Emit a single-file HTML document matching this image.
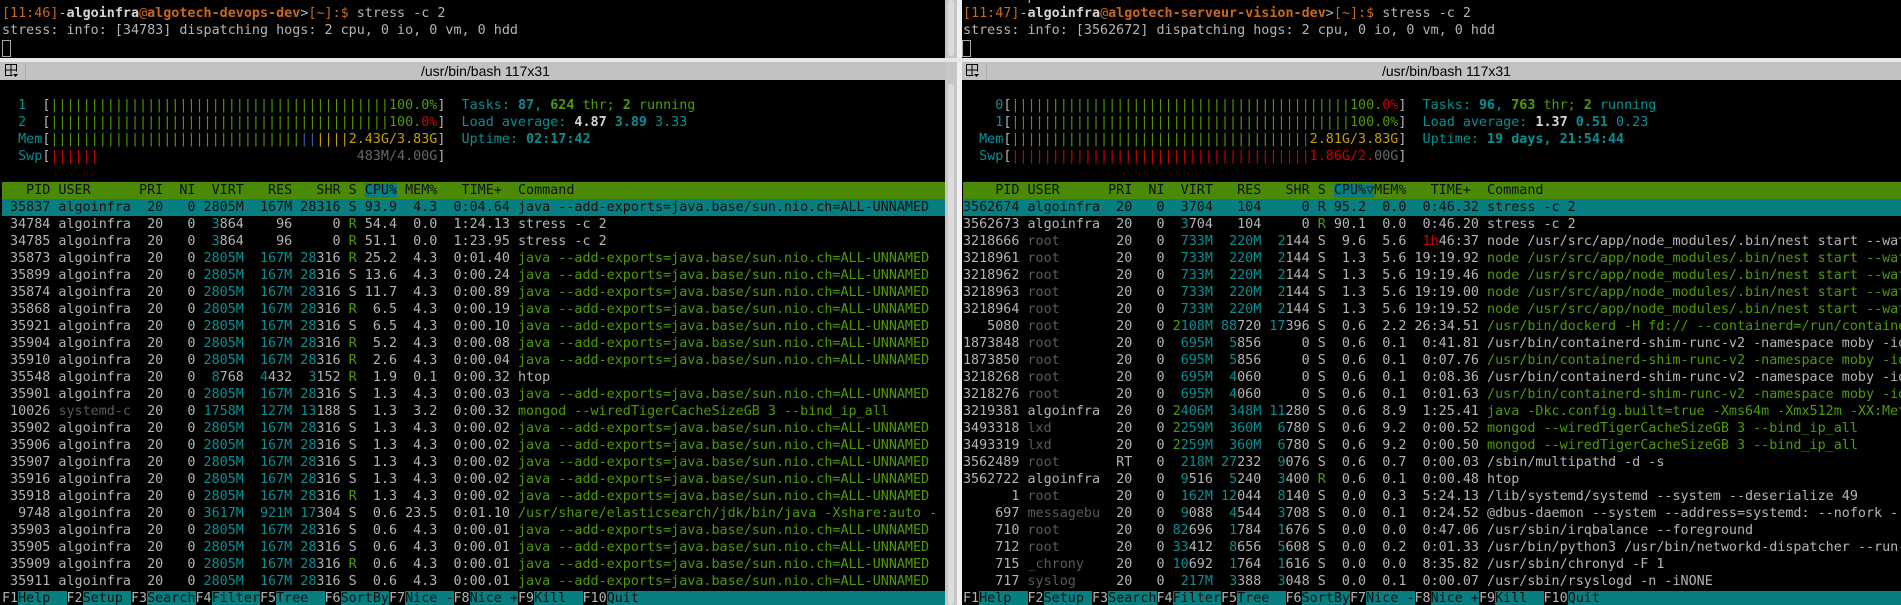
<!DOCTYPE html>
<html><head><meta charset="utf-8"><style>
*{margin:0;padding:0;box-sizing:border-box}
html,body{width:1901px;height:605px;background:#000;overflow:hidden}
.p{position:absolute;font-family:"DejaVu Sans Mono","Liberation Mono",monospace;font-size:13.4px;line-height:17px;color:#b4b4b4;white-space:normal;overflow:hidden}
.r{height:17px;white-space:pre;overflow:hidden}
.c{color:#079092}.g{color:#4e9a06}.d{color:#5a5a5a}.x{color:#cc0000}.w{color:#d4d4d4;font-weight:bold}
.cb{color:#079092;font-weight:bold}.gb{color:#4e9a06;font-weight:bold}
.bl{color:#3465a4}.o{color:#c4a000}.gr{color:#666}
.o1{color:#c8681e}.o2{color:#c8681e;font-weight:bold}
.sel{background:#077f80;color:#111}
.hd{background:#4a8a06;color:#111}
.hc{background:#077f80}
.fk{color:#b4b4b4}.fl{background:#077f80;color:#111}
.bar{position:absolute;top:62px;height:18px;background:#c2c2c2}
.ttl{position:absolute;top:62px;height:18px;line-height:18px;font-family:"Liberation Sans",sans-serif;font-size:14px;color:#000}
</style></head><body>
<div class="p" style="left:2px;top:-12px;width:944px;height:70px"><div class="r"> </div><div class="r"><span class="o1">[11:46]</span>-<span class="w">algoinfra</span><span class="o1">@</span><span class="o2">algotech-devops-dev</span>&gt;<span class="o1">[~]:$</span> stress -c 2</div><div class="r">stress: info: [34783] dispatching hogs: 2 cpu, 0 io, 0 vm, 0 hdd</div></div>
<div style="position:absolute;left:2px;top:40px;width:9px;height:17px;border:1px solid #aaa"></div>
<div class="p" style="left:963px;top:-12px;width:938px;height:70px"><div class="r">streamzip  stress</div><div class="r"><span class="o1">[11:47]</span>-<span class="w">algoinfra</span><span class="o1">@</span><span class="o2">algotech-serveur-vision-dev</span>&gt;<span class="o1">[~]:$</span> stress -c 2</div><div class="r">stress: info: [3562672] dispatching hogs: 2 cpu, 0 io, 0 vm, 0 hdd</div></div>
<div style="position:absolute;left:962px;top:40px;width:9px;height:17px;border:1px solid #aaa"></div>
<div class="bar" style="left:0;width:1901px"></div>
<div style="position:absolute;left:945px;top:0;width:12px;height:605px;background:#c6c6c6"></div>
<div style="position:absolute;left:948px;top:0;width:6px;height:56px;background:#dcdcdc;border-radius:3px"></div>
<div style="position:absolute;left:948px;top:84px;width:6px;height:521px;background:#dcdcdc;border-radius:3px"></div>
<div style="position:absolute;left:957px;top:0;width:5px;height:605px;background:#f0f0f0"></div>
<div style="position:absolute;left:0;top:58px;width:1901px;height:4px;background:#e8e8e8"></div>
<svg style="position:absolute;left:5px;top:64px" width="14" height="14" viewBox="0 0 14 14"><path d="M0.5 0.5H11.5V7.5M0.5 0.5V11.5H7.5M6 0.5V11.5M0.5 6H11.5" fill="none" stroke="#000"/><path d="M8 10H13L10.5 13Z" fill="#000"/></svg>
<div style="position:absolute;left:25px;top:63px;width:1px;height:16px;background:#aaa"></div>
<svg style="position:absolute;left:966px;top:64px" width="14" height="14" viewBox="0 0 14 14"><path d="M0.5 0.5H11.5V7.5M0.5 0.5V11.5H7.5M6 0.5V11.5M0.5 6H11.5" fill="none" stroke="#000"/><path d="M8 10H13L10.5 13Z" fill="#000"/></svg>
<div style="position:absolute;left:986px;top:63px;width:1px;height:16px;background:#aaa"></div>
<div class="ttl" style="left:421px">/usr/bin/bash 117x31</div>
<div class="ttl" style="left:1382px">/usr/bin/bash 117x31</div>

<div class="p" style="left:2px;top:80px;width:943px;height:525px">
<div class="r"> </div>
<div class="r"><span class="c">  1  </span>[<span class="g">||||||||||||||||||||||||||||||||||||||||||100.0%</span>]  <span class="c">Tasks: </span><span class="cb">87</span><span class="c">, </span><span class="gb">624</span><span class="g"> thr; </span><span class="gb">2</span><span class="g"> running</span></div>
<div class="r"><span class="c">  2  </span>[<span class="g">||||||||||||||||||||||||||||||||||||||||||100.</span><span class="x">0%</span>]  <span class="c">Load average: </span><span class="w">4.87 </span><span class="cb">3.89 </span><span class="c">3.33</span></div>
<div class="r"><span class="c">  Mem</span>[<span class="g">|||||||||||||||||||||||||||||||</span><span class="bl">||</span><span class="o">||||2.43G/3.83G</span>]  <span class="c">Uptime: </span><span class="cb">02:17:42</span></div>
<div class="r"><span class="c">  Swp</span>[<span class="x">||||||</span>                                <span class="gr">483M/4.00G</span>]</div>
<div class="r"> </div>
<div class="r hd">   PID USER      PRI  NI  VIRT   RES   SHR S <span class="hc">CPU%</span> MEM%   TIME+  Command                                                                  </div>
<div class="r sel"> 35837 algoinfra  20   0 2805M  167M 28316 S 93.9  4.3  0:04.64 java --add-exports=java.base/sun.nio.ch=ALL-UNNAMED                    </div>
<div class="r"> 34784 algoinfra  20   0  <span class="c">3</span>864    96     0 <span class="g">R</span> 54.4  0.0  1:24.13 stress -c 2</div>
<div class="r"> 34785 algoinfra  20   0  <span class="c">3</span>864    96     0 <span class="g">R</span> 51.1  0.0  1:23.95 stress -c 2</div>
<div class="r"> 35873 algoinfra  20   0 <span class="c">2805M</span>  <span class="c">167M</span> <span class="c">28</span>316 <span class="g">R</span> 25.2  4.3  0:01.40 <span class="g">java --add-exports=java.base/sun.nio.ch=ALL-UNNAMED</span></div>
<div class="r"> 35899 algoinfra  20   0 <span class="c">2805M</span>  <span class="c">167M</span> <span class="c">28</span>316 S 13.6  4.3  0:00.24 <span class="g">java --add-exports=java.base/sun.nio.ch=ALL-UNNAMED</span></div>
<div class="r"> 35874 algoinfra  20   0 <span class="c">2805M</span>  <span class="c">167M</span> <span class="c">28</span>316 S 11.7  4.3  0:00.89 <span class="g">java --add-exports=java.base/sun.nio.ch=ALL-UNNAMED</span></div>
<div class="r"> 35868 algoinfra  20   0 <span class="c">2805M</span>  <span class="c">167M</span> <span class="c">28</span>316 <span class="g">R</span>  6.5  4.3  0:00.19 <span class="g">java --add-exports=java.base/sun.nio.ch=ALL-UNNAMED</span></div>
<div class="r"> 35921 algoinfra  20   0 <span class="c">2805M</span>  <span class="c">167M</span> <span class="c">28</span>316 S  6.5  4.3  0:00.10 <span class="g">java --add-exports=java.base/sun.nio.ch=ALL-UNNAMED</span></div>
<div class="r"> 35904 algoinfra  20   0 <span class="c">2805M</span>  <span class="c">167M</span> <span class="c">28</span>316 <span class="g">R</span>  5.2  4.3  0:00.08 <span class="g">java --add-exports=java.base/sun.nio.ch=ALL-UNNAMED</span></div>
<div class="r"> 35910 algoinfra  20   0 <span class="c">2805M</span>  <span class="c">167M</span> <span class="c">28</span>316 <span class="g">R</span>  2.6  4.3  0:00.04 <span class="g">java --add-exports=java.base/sun.nio.ch=ALL-UNNAMED</span></div>
<div class="r"> 35548 algoinfra  20   0  <span class="c">8</span>768  <span class="c">4</span>432  <span class="c">3</span>152 <span class="g">R</span>  1.9  0.1  0:00.32 htop</div>
<div class="r"> 35901 algoinfra  20   0 <span class="c">2805M</span>  <span class="c">167M</span> <span class="c">28</span>316 S  1.3  4.3  0:00.03 <span class="g">java --add-exports=java.base/sun.nio.ch=ALL-UNNAMED</span></div>
<div class="r"> 10026 <span class="d">systemd-c</span>  20   0 <span class="c">1758M</span>  <span class="c">127M</span> <span class="c">13</span>188 S  1.3  3.2  0:00.32 <span class="g">mongod --wiredTigerCacheSizeGB 3 --bind_ip_all</span></div>
<div class="r"> 35902 algoinfra  20   0 <span class="c">2805M</span>  <span class="c">167M</span> <span class="c">28</span>316 S  1.3  4.3  0:00.02 <span class="g">java --add-exports=java.base/sun.nio.ch=ALL-UNNAMED</span></div>
<div class="r"> 35906 algoinfra  20   0 <span class="c">2805M</span>  <span class="c">167M</span> <span class="c">28</span>316 S  1.3  4.3  0:00.02 <span class="g">java --add-exports=java.base/sun.nio.ch=ALL-UNNAMED</span></div>
<div class="r"> 35907 algoinfra  20   0 <span class="c">2805M</span>  <span class="c">167M</span> <span class="c">28</span>316 S  1.3  4.3  0:00.02 <span class="g">java --add-exports=java.base/sun.nio.ch=ALL-UNNAMED</span></div>
<div class="r"> 35916 algoinfra  20   0 <span class="c">2805M</span>  <span class="c">167M</span> <span class="c">28</span>316 S  1.3  4.3  0:00.02 <span class="g">java --add-exports=java.base/sun.nio.ch=ALL-UNNAMED</span></div>
<div class="r"> 35918 algoinfra  20   0 <span class="c">2805M</span>  <span class="c">167M</span> <span class="c">28</span>316 <span class="g">R</span>  1.3  4.3  0:00.02 <span class="g">java --add-exports=java.base/sun.nio.ch=ALL-UNNAMED</span></div>
<div class="r">  9748 algoinfra  20   0 <span class="c">3617M</span>  <span class="c">921M</span> <span class="c">17</span>304 S  0.6 23.5  0:01.10 <span class="g">/usr/share/elasticsearch/jdk/bin/java -Xshare:auto -</span></div>
<div class="r"> 35903 algoinfra  20   0 <span class="c">2805M</span>  <span class="c">167M</span> <span class="c">28</span>316 S  0.6  4.3  0:00.01 <span class="g">java --add-exports=java.base/sun.nio.ch=ALL-UNNAMED</span></div>
<div class="r"> 35905 algoinfra  20   0 <span class="c">2805M</span>  <span class="c">167M</span> <span class="c">28</span>316 S  0.6  4.3  0:00.01 <span class="g">java --add-exports=java.base/sun.nio.ch=ALL-UNNAMED</span></div>
<div class="r"> 35909 algoinfra  20   0 <span class="c">2805M</span>  <span class="c">167M</span> <span class="c">28</span>316 <span class="g">R</span>  0.6  4.3  0:00.01 <span class="g">java --add-exports=java.base/sun.nio.ch=ALL-UNNAMED</span></div>
<div class="r"> 35911 algoinfra  20   0 <span class="c">2805M</span>  <span class="c">167M</span> <span class="c">28</span>316 S  0.6  4.3  0:00.01 <span class="g">java --add-exports=java.base/sun.nio.ch=ALL-UNNAMED</span></div>
<div class="r"><span class="fk">F1</span><span class="fl">Help  </span><span class="fk">F2</span><span class="fl">Setup </span><span class="fk">F3</span><span class="fl">Search</span><span class="fk">F4</span><span class="fl">Filter</span><span class="fk">F5</span><span class="fl">Tree  </span><span class="fk">F6</span><span class="fl">SortBy</span><span class="fk">F7</span><span class="fl">Nice -</span><span class="fk">F8</span><span class="fl">Nice +</span><span class="fk">F9</span><span class="fl">Kill  </span><span class="fk">F10</span><span class="fl">Quit                                      </span></div>
</div>

<div class="p" style="left:963px;top:80px;width:938px;height:525px">
<div class="r"> </div>
<div class="r"><span class="c">    0</span>[<span class="g">||||||||||||||||||||||||||||||||||||||||||100.</span><span class="x">0%</span>]  <span class="c">Tasks: </span><span class="cb">96</span><span class="c">, </span><span class="gb">763</span><span class="g"> thr; </span><span class="gb">2</span><span class="c"> running</span></div>
<div class="r"><span class="c">    1</span>[<span class="g">||||||||||||||||||||||||||||||||||||||||||100.0%</span>]  <span class="c">Load average: </span><span class="w">1.37 </span><span class="cb">0.51 </span><span class="c">0.23</span></div>
<div class="r"><span class="c">  Mem</span>[<span class="g">||||||||||||||||||||||||||||||||||||</span><span class="bl">|</span><span class="o">2.81G/3.83G</span>]  <span class="c">Uptime: </span><span class="cb">19 days, 21:54:44</span></div>
<div class="r"><span class="c">  Swp</span>[<span class="x">|||||||||||||||||||||||||||||||||||||1.86G/2.</span><span class="gr">00G</span>]</div>
<div class="r"> </div>
<div class="r hd">    PID USER      PRI  NI  VIRT   RES   SHR S <span class="hc">CPU%▽</span>MEM%   TIME+  Command                                                                 </div>
<div class="r sel">3562674 algoinfra  20   0  3704   104     0 R 95.2  0.0  0:46.32 stress -c 2                                                            </div>
<div class="r">3562673 algoinfra  20   0  <span class="c">3</span>704   104     0 <span class="g">R</span> 90.1  0.0  0:46.20 stress -c 2</div>
<div class="r">3218666 <span class="d">root</span>       20   0  <span class="c">733M</span>  <span class="c">220M</span>  <span class="c">2</span>144 S  9.6  5.6  <span class="x">1h</span>46:37 node /usr/src/app/node_modules/.bin/nest start --wat</div>
<div class="r">3218961 <span class="d">root</span>       20   0  <span class="c">733M</span>  <span class="c">220M</span>  <span class="c">2</span>144 S  1.3  5.6 19:19.92 <span class="g">node /usr/src/app/node_modules/.bin/nest start --wat</span></div>
<div class="r">3218962 <span class="d">root</span>       20   0  <span class="c">733M</span>  <span class="c">220M</span>  <span class="c">2</span>144 S  1.3  5.6 19:19.46 <span class="g">node /usr/src/app/node_modules/.bin/nest start --wat</span></div>
<div class="r">3218963 <span class="d">root</span>       20   0  <span class="c">733M</span>  <span class="c">220M</span>  <span class="c">2</span>144 S  1.3  5.6 19:19.00 <span class="g">node /usr/src/app/node_modules/.bin/nest start --wat</span></div>
<div class="r">3218964 <span class="d">root</span>       20   0  <span class="c">733M</span>  <span class="c">220M</span>  <span class="c">2</span>144 S  1.3  5.6 19:19.52 <span class="g">node /usr/src/app/node_modules/.bin/nest start --wat</span></div>
<div class="r">   5080 <span class="d">root</span>       20   0 <span class="g">2</span><span class="c">108M</span> <span class="c">88</span>720 <span class="c">17</span>396 S  0.6  2.2 26:34.51 <span class="g">/usr/bin/dockerd -H fd:// --containerd=/run/containe</span></div>
<div class="r">1873848 <span class="d">root</span>       20   0  <span class="c">695M</span>  <span class="c">5</span>856     0 S  0.6  0.1  0:41.81 /usr/bin/containerd-shim-runc-v2 -namespace moby -id</div>
<div class="r">1873850 <span class="d">root</span>       20   0  <span class="c">695M</span>  <span class="c">5</span>856     0 S  0.6  0.1  0:07.76 <span class="g">/usr/bin/containerd-shim-runc-v2 -namespace moby -id</span></div>
<div class="r">3218268 <span class="d">root</span>       20   0  <span class="c">695M</span>  <span class="c">4</span>060     0 S  0.6  0.1  0:08.36 /usr/bin/containerd-shim-runc-v2 -namespace moby -id</div>
<div class="r">3218276 <span class="d">root</span>       20   0  <span class="c">695M</span>  <span class="c">4</span>060     0 S  0.6  0.1  0:01.63 <span class="g">/usr/bin/containerd-shim-runc-v2 -namespace moby -id</span></div>
<div class="r">3219381 algoinfra  20   0 <span class="g">2</span><span class="c">406M</span>  <span class="c">348M</span> <span class="c">11</span>280 S  0.6  8.9  1:25.41 <span class="g">java -Dkc.config.built=true -Xms64m -Xmx512m -XX:Met</span></div>
<div class="r">3493318 <span class="d">lxd</span>        20   0 <span class="g">2</span><span class="c">259M</span>  <span class="c">360M</span>  <span class="c">6</span>780 S  0.6  9.2  0:00.52 <span class="g">mongod --wiredTigerCacheSizeGB 3 --bind_ip_all</span></div>
<div class="r">3493319 <span class="d">lxd</span>        20   0 <span class="g">2</span><span class="c">259M</span>  <span class="c">360M</span>  <span class="c">6</span>780 S  0.6  9.2  0:00.50 <span class="g">mongod --wiredTigerCacheSizeGB 3 --bind_ip_all</span></div>
<div class="r">3562489 <span class="d">root</span>       RT   0  <span class="c">218M</span> <span class="c">27</span>232  <span class="c">9</span>076 S  0.6  0.7  0:00.03 /sbin/multipathd -d -s</div>
<div class="r">3562722 algoinfra  20   0  <span class="c">9</span>516  <span class="c">5</span>240  <span class="c">3</span>400 <span class="g">R</span>  0.6  0.1  0:00.48 htop</div>
<div class="r">      1 <span class="d">root</span>       20   0  <span class="c">162M</span> <span class="c">12</span>044  <span class="c">8</span>140 S  0.0  0.3  5:24.13 /lib/systemd/systemd --system --deserialize 49</div>
<div class="r">    697 <span class="d">messagebu</span>  20   0  <span class="c">9</span>088  <span class="c">4</span>544  <span class="c">3</span>708 S  0.0  0.1  0:24.52 @dbus-daemon --system --address=systemd: --nofork -</div>
<div class="r">    710 <span class="d">root</span>       20   0 <span class="c">82</span>696  <span class="c">1</span>784  <span class="c">1</span>676 S  0.0  0.0  0:47.06 /usr/sbin/irqbalance --foreground</div>
<div class="r">    712 <span class="d">root</span>       20   0 <span class="c">33</span>412  <span class="c">8</span>656  <span class="c">5</span>608 S  0.0  0.2  0:01.33 /usr/bin/python3 /usr/bin/networkd-dispatcher --run-</div>
<div class="r">    715 <span class="d">_chrony</span>    20   0 <span class="c">10</span>692  <span class="c">1</span>764  <span class="c">1</span>616 S  0.0  0.0  8:35.82 /usr/sbin/chronyd -F 1</div>
<div class="r">    717 <span class="d">syslog</span>     20   0  <span class="c">217M</span>  <span class="c">3</span>388  <span class="c">3</span>048 S  0.0  0.1  0:00.07 /usr/sbin/rsyslogd -n -iNONE</div>
<div class="r"><span class="fk">F1</span><span class="fl">Help  </span><span class="fk">F2</span><span class="fl">Setup </span><span class="fk">F3</span><span class="fl">Search</span><span class="fk">F4</span><span class="fl">Filter</span><span class="fk">F5</span><span class="fl">Tree  </span><span class="fk">F6</span><span class="fl">SortBy</span><span class="fk">F7</span><span class="fl">Nice -</span><span class="fk">F8</span><span class="fl">Nice +</span><span class="fk">F9</span><span class="fl">Kill  </span><span class="fk">F10</span><span class="fl">Quit                                      </span></div>
</div>
</body></html>
